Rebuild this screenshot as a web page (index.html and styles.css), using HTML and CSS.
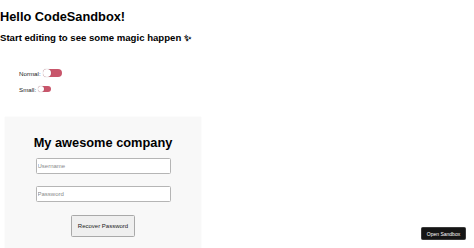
FILE: index.html
```html
<!DOCTYPE html>
<html>
<head>
<meta charset="utf-8">
<link rel="stylesheet" href="styles.css">
</head>
<body>
<h1 class="title">Hello CodeSandbox!</h1>
<h2 class="subtitle">Start editing to see some magic happen <span class="sparkle">&#x2728;&#xFE0E;</span></h2>
<div class="toggles">
  <div class="toggle-row">
    <span class="toggle-label">Normal:</span>
    <span class="switch"><span class="knob"></span></span>
  </div>
  <div class="toggle-row">
    <span class="toggle-label">Small:</span>
    <span class="switch switch-small"><span class="knob"></span></span>
  </div>
</div>
<div class="card">
  <h1 class="card-title">My awesome company</h1>
  <form class="form">
    <input class="field" type="text" placeholder="Username">
    <input class="field field-second" type="password" placeholder="Password">
    <button class="recover" type="button">Recover Password</button>
  </form>
</div>
<a class="open-sandbox">Open Sandbox</a>
</body>
</html>
```
FILE: styles.css
```css
html, body {
  margin: 0;
  padding: 0;
  background: #ffffff;
  font-family: "Liberation Sans", Arial, sans-serif;
  color: #000;
  overflow: hidden;
}

.title {
  font-size: 12.8px;
  font-weight: bold;
  margin: 8.6px 0;
}

.subtitle {
  font-size: 9.6px;
  font-weight: bold;
  margin: 8px 0 0;
  height: 11px;
}

.sparkle {
  font-family: "DejaVu Sans", sans-serif;
  font-weight: bold;
  font-size: 9px;
  line-height: 0;
  color: #111;
}

.toggles {
  margin-top: 26px;
  padding-left: 19px;
  display: flex;
  flex-direction: column;
  gap: 8px;
}

.toggle-row {
  display: flex;
  align-items: center;
  height: 8px;
  gap: 2px;
}

.toggle-label {
  font-size: 6.2px;
  color: #222;
}

.switch {
  position: relative;
  display: inline-block;
  width: 19px;
  height: 8px;
  border-radius: 4px;
  background: #c8566b;
}

.switch .knob {
  position: absolute;
  left: 0;
  top: 0;
  width: 8px;
  height: 8px;
  border-radius: 50%;
  background: #ffffff;
  box-shadow: 0 0 1px rgba(0, 0, 0, 0.35);
}

.switch-small {
  width: 13px;
  height: 6px;
  border-radius: 3px;
}

.switch-small .knob {
  width: 6px;
  height: 6px;
}

.card {
  margin: 24px 0 0 5px;
  width: 196px;
  padding: 9px 0 40px;
  background: #f8f8f8;
  box-shadow: 0 0 1px rgba(0, 0, 0, 0.08);
}

.card-title {
  font-size: 12.8px;
  font-weight: bold;
  text-align: center;
  margin: 8.6px 0;
}

.form {
  margin-top: 4.6px;
  display: flex;
  flex-direction: column;
  align-items: center;
}

.field {
  box-sizing: border-box;
  width: 135px;
  height: 16px;
  margin: 0;
  padding: 0 1px;
  border: 1px solid #b5b5b5;
  border-radius: 1.5px;
  background: #fff;
  font-family: "Liberation Sans", Arial, sans-serif;
  font-size: 6px;
  outline: none;
}

.field::placeholder {
  color: #8a8a8a;
}

.field-second {
  margin-top: 11.5px;
}

.recover {
  box-sizing: border-box;
  margin-top: 13px;
  width: 64px;
  height: 22px;
  padding: 0;
  background: #efefef;
  border: 1px solid #a9a9a9;
  border-radius: 1.5px;
  font-family: "Liberation Sans", Arial, sans-serif;
  font-size: 6px;
  font-weight: normal;
  color: #222;
}

.open-sandbox {
  position: fixed;
  right: 8px;
  bottom: 8px;
  box-sizing: border-box;
  width: 45px;
  height: 13px;
  display: flex;
  align-items: center;
  justify-content: center;
  background: #151515;
  border: 1px solid #3a3a3a;
  border-radius: 1.5px;
  color: #ffffff;
  font-size: 5px;
}
```
